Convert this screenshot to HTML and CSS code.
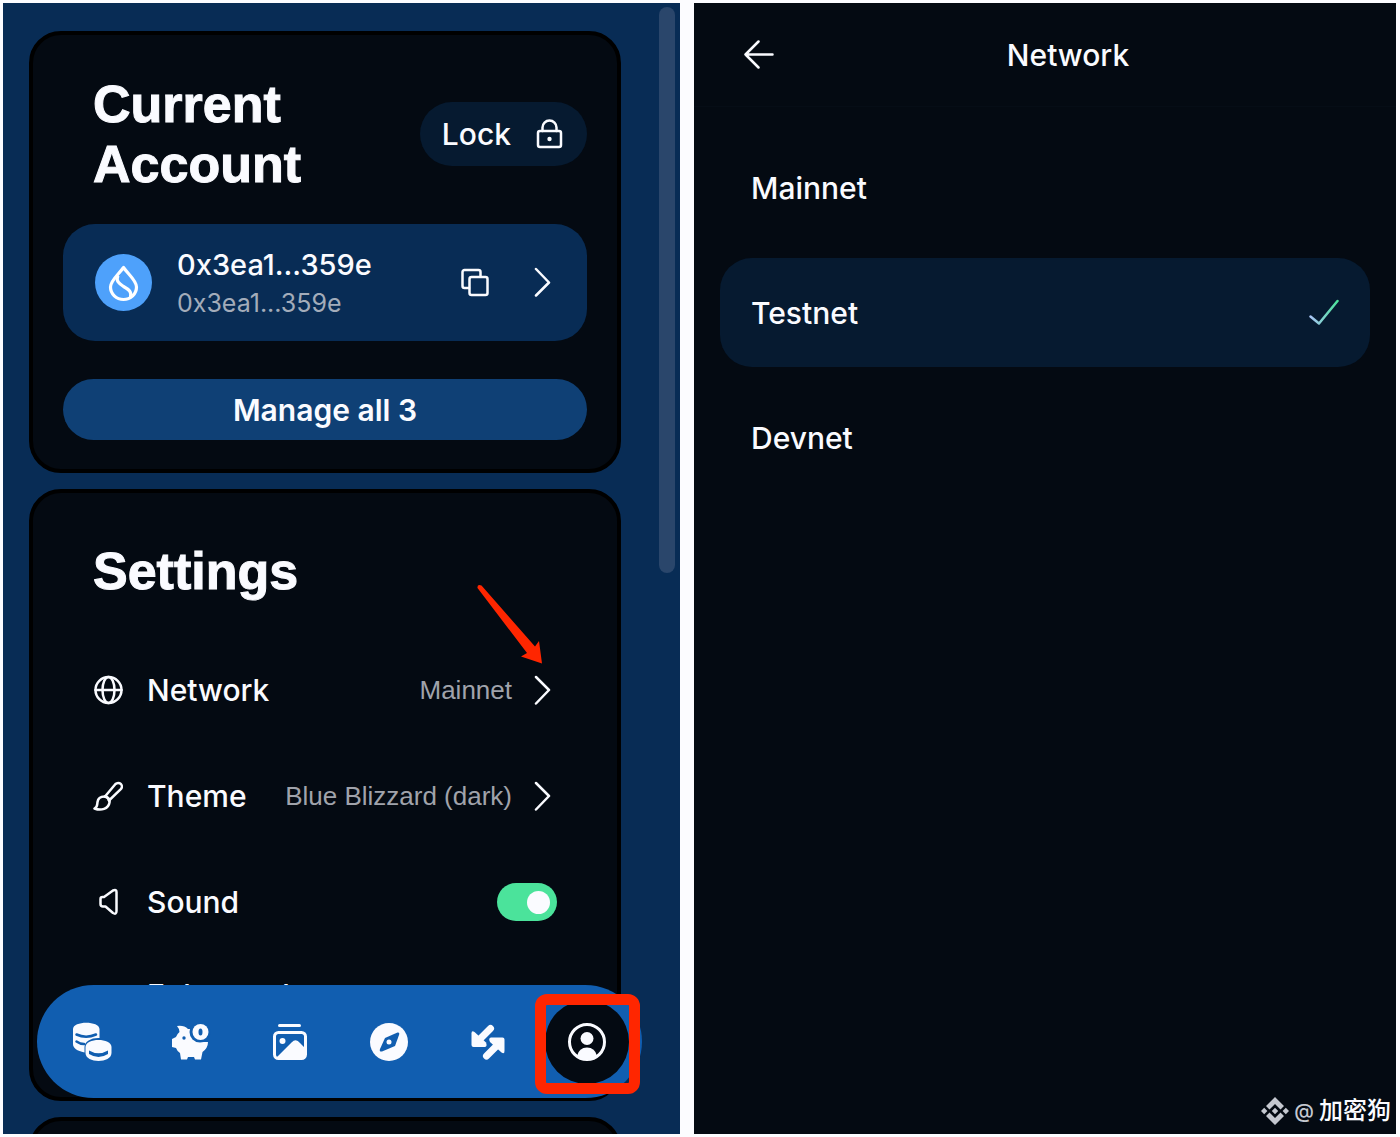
FILE: index.html
```
<!DOCTYPE html>
<html lang="en">
<head>
    <meta charset="UTF-8">
    <meta name="viewport" content="width=device-width, initial-scale=1.0">
    <title>Wallet Settings</title>
    <link rel="stylesheet" href="styles.css">
</head>
<body>

    <div class="app">
        <main class="panel wallet">
            <div class="cards">
                <section class="card">
                    <div class="card-header">
                        <h2>Current Account</h2>
                        <button class="lock-btn" type="button">
                            Lock
                            <svg class="icon" viewBox="0 0 30 30">
                                <rect x="3" y="12" width="23" height="16" rx="2"/>
                                <path d="M7.500 12V8.500a7 7 0 0 1 14 0V12"/>
                                <circle class="solid" cx="14.500" cy="20" r="2.200"/>
                            </svg>
                        </button>
                    </div>

                    <div class="account">
                        <svg class="avatar" viewBox="0 0 57 57">
                            <circle class="avatar-bg" cx="28.500" cy="28.500" r="28.500"/>
                            <path d="M28.500 13.500C24 20 15.500 26.500 15.500 33a13 12.500 0 0 0 26 0C41.500 26.500 33 20 28.500 13.500Z"/>
                            <path d="M23 21.500C20.500 27 24 29.500 28.500 32.500C34 35.500 37 38 35.500 43.500"/>
                        </svg>
                        <div class="account-name">
                            <span>0x3ea1...359e</span>
                            <span class="address">0x3ea1...359e</span>
                        </div>
                        <button class="icon-btn" type="button" aria-label="Copy address">
                            <svg class="icon" viewBox="0 0 30 30">
                                <path d="M9 21H4.500a2 2 0 0 1-2-2V5a2 2 0 0 1 2-2H18.500a2 2 0 0 1 2 2V9.500"/>
                                <rect x="9.500" y="10" width="18" height="18" rx="2"/>
                            </svg>
                        </button>
                        <button class="icon-btn" type="button" aria-label="Open account">
                            <svg class="icon" viewBox="0 0 30 30"><path d="M9 2L22 15.500L9 28.500"/></svg>
                        </button>
                    </div>

                    <button class="manage-btn" type="button">Manage all 3</button>
                </section>

                <section class="card settings">
                    <h2>Settings</h2>
                    <div class="row">
                        <svg class="icon" viewBox="0 0 30 30">
                            <circle cx="15.500" cy="15" r="13"/>
                            <ellipse cx="15.500" cy="15" rx="6" ry="13"/>
                            <path d="M2.500 15H28.500"/>
                        </svg>
                        <span class="row-label">Network</span>
                        <span class="row-value">Mainnet</span>
                        <button class="icon-btn" type="button" aria-label="Change network">
                            <svg class="icon" viewBox="0 0 30 30"><path d="M9 2L22 15L9 28.500"/></svg>
                        </button>
                        <svg class="pointer" viewBox="0 0 66 80">
                            <path d="M4.500 1.500L58 62.500L62 57L65 79.500L44 72.500L50 69L0.500 4Q0 0 4.500 1.500Z"/>
                        </svg>
                    </div>
                    <div class="row">
                        <svg class="icon" viewBox="0 0 30 30">
                            <path d="M12 15.500L22.500 3a3.700 3.700 0 0 1 5.300 5.200L16 19.500"/>
                            <path d="M11.500 15.500C15 15.500 17 18 16.500 21.500C15.500 28 8 30 1.500 27.500C4.500 26 4 24.500 4.500 21C5 17.500 8 15.500 11.500 15.500Z"/>
                            <path d="M12 15.500Q15.500 16.500 16.200 20"/>
                        </svg>
                        <span class="row-label">Theme</span>
                        <span class="row-value">Blue Blizzard (dark)</span>
                        <button class="icon-btn" type="button" aria-label="Change theme">
                            <svg class="icon" viewBox="0 0 30 30"><path d="M9 2L22 15L9 28.500"/></svg>
                        </button>
                    </div>
                    <div class="row">
                        <svg class="icon" viewBox="0 0 30 30">
                            <path d="M7.500 12Q7.500 10 9.500 10H11L20 3.500Q23.500 2 23.500 5V24Q23.500 28 20 26L12.500 19.500H10Q7.500 19.500 7.500 17Z"/>
                        </svg>
                        <label class="row-label" for="sound">Sound</label>
                        <input class="toggle" type="checkbox" id="sound" checked>
                    </div>
                    <div class="row row-last">
                        <span class="row-label">Enhanced</span>
                    </div>
                </section>

                <section class="card"></section>
            </div>

            <div class="scrollbar"></div>

            <nav class="tabs">
                <button class="tab" type="button" aria-label="Coins">
                    <svg viewBox="0 0 40 40">
                        <path d="M1 7C1 -1.500 27.500 -1.500 27.500 7V16C20 15.500 12.500 19 12.500 25V30.500C5 29 1 26 1 22Z"/>
                        <path class="cut" d="M4.500 12.500Q14 17 24 12.500M4.500 19.500Q8 22 12 22"/>
                        <path d="M13.500 25C13.500 15.500 39.500 15.500 39.500 25V31C39.500 41.500 13.500 41.500 13.500 31Z"/>
                        <path class="dot" d="M17 28.500V32Q26.500 38 36 32V28.500Q26.500 34 17 28.500Z"/>
                    </svg>
                </button>
                <button class="tab" type="button" aria-label="Savings">
                    <svg viewBox="0 0 40 40">
                        <path d="M6 4Q13 3 17 7H22Q22 19 31 20H37Q37 26 31.500 30L30 37.500H24L23 35H17L16 37.500H10L9 31Q6 29 5 26L1 25V17L5 15Q6 12 8.500 10Q8 6 6 4Z"/>
                        <circle class="dot" cx="29" cy="10" r="10.500"/>
                        <circle cx="29.500" cy="10" r="8"/>
                        <ellipse class="dot" cx="29.500" cy="10" rx="2" ry="3.500"/>
                        <circle class="dot" cx="13" cy="16" r="1.700"/>
                    </svg>
                </button>
                <button class="tab" type="button" aria-label="Collectibles">
                    <svg viewBox="0 0 40 40">
                        <path class="line" d="M9.500 3.500H29.500"/>
                        <rect class="line" x="4.500" y="10.500" width="31" height="26" rx="4"/>
                        <circle cx="12.500" cy="19" r="3"/>
                        <path d="M6 36L21.500 20.500Q26 16 30 21L35 26V36Z"/>
                    </svg>
                </button>
                <button class="tab" type="button" aria-label="Explore">
                    <svg viewBox="0 0 40 40">
                        <circle cx="20" cy="20" r="19"/>
                        <path class="dot" d="M28.500 10.500Q31 10 30 13L26 24L13 29.500Q10 30 11 27L16 16Z"/>
                        <circle cx="20" cy="20" r="2.500"/>
                    </svg>
                </button>
                <button class="tab" type="button" aria-label="Activity">
                    <svg viewBox="0 0 40 40">
                        <path class="thick" d="M22.500 6.500L12 17"/>
                        <path d="M3.500 11.500Q3.500 8 6.500 10L18 20.500Q19.500 24.500 17 25H5.500Q3.500 25 3.500 23Z"/>
                        <path class="thick" d="M18.500 34L29 23.500"/>
                        <path d="M36.500 29Q36.500 32.500 33.500 30.500L22 20Q20 16 23 15.500H34.500Q36.500 15.500 36.500 17.500Z"/>
                    </svg>
                </button>
                <button class="tab active" type="button" aria-label="Account">
                    <svg viewBox="0 0 40 40">
                        <circle class="line" cx="20" cy="20" r="17.500"/>
                        <circle cx="20" cy="16.500" r="6.500"/>
                        <path d="M10 34Q12 25.500 20 25.500Q28 25.500 30 34Q20 40 10 34Z"/>
                    </svg>
                </button>
            </nav>
        </main>

        <section class="panel network">
            <header class="network-header">
                <button class="icon-btn" type="button" aria-label="Back">
                    <svg class="icon" viewBox="0 0 30 30"><path d="M14.500 1.500L1.500 14.500L14.500 27.500M1.500 14.500H28.500"/></svg>
                </button>
                <h1>Network</h1>
            </header>

            <div class="options">
                <button class="option" type="button">Mainnet</button>
                <button class="option selected" type="button">
                    Testnet
                    <svg class="icon" viewBox="0 0 30 30">
                        <defs>
                            <linearGradient id="tick" x1="0" y1="0" x2="1" y2="0">
                                <stop offset="0" stop-color="#a9c4f5"/>
                                <stop offset="1" stop-color="#4be39b"/>
                            </linearGradient>
                        </defs>
                        <path d="M1.500 18.500L10 25.500L28.500 3" stroke="url(#tick)"/>
                    </svg>
                </button>
                <button class="option" type="button">Devnet</button>
            </div>

            <footer class="credit">
                <svg viewBox="0 0 28 28">
                    <path d="M14 0L23 9L19.500 12.500L14 7L8.500 12.500L5 9ZM14 28L23 19L19.500 15.500L14 21L8.500 15.500L5 19ZM14 10.800L17.200 14L14 17.200L10.800 14ZM3.200 10.800L6.400 14L3.200 17.200L0 14ZM24.800 10.800L28 14L24.800 17.200L21.600 14Z"/>
                </svg>
                <span class="at">@</span>
                <span>加密狗</span>
            </footer>
        </section>
    </div>

</body>
</html>
```
FILE: styles.css
```
* {
    box-sizing: border-box;
}

body {
    margin: 0;
    font-family: Inter, "Noto Sans CJK SC", sans-serif;
    font-size: 30px;
    font-weight: 500;
    color: #fafbff;
    background-color: #fcfcff;
}

h1, h2 {
    margin: 0;
}

h2 {
    font-family: "Liberation Sans", Arial, sans-serif;
    font-size: 52px;
    line-height: 60px;
    -webkit-text-stroke: 1px currentColor;
}

button {
    padding: 0;
    border: none;
    font: inherit;
    color: inherit;
    background: none;
    cursor: pointer;
}

.app {
    display: grid;
    grid-template-columns: 677fr 702fr;
    gap: 14px;
    height: 100vh;
    padding: 3px 4px 3px 3px;
}

.panel {
    position: relative;
    display: flex;
    flex-direction: column;
    min-height: 0;
    overflow: hidden;
}

.icon {
    display: block;
    flex: none;
    width: 30px;
    height: 30px;
    fill: none;
    stroke: currentColor;
    stroke-width: 2.5;
    stroke-linecap: round;
    stroke-linejoin: round;
}

.icon .solid {
    fill: currentColor;
    stroke: none;
}

/* Wallet panel */
.wallet {
    padding: 28px 59px 0 26px;
    background-color: #082c55;
}

.cards {
    display: flex;
    flex-direction: column;
    gap: 16px;
}

.card {
    padding: 39px 30px 29px;
    border: 4px solid #000;
    border-radius: 32px;
    background-color: #040a12;
}

.card-header {
    display: flex;
    align-items: center;
    justify-content: space-between;
    padding-left: 30px;
}

.card-header h2 {
    width: min-content;
}

.lock-btn {
    display: flex;
    align-items: center;
    gap: 24px;
    height: 64px;
    padding: 0 22px;
    border-radius: 32px;
    background-color: #061a30;
}

.account {
    display: flex;
    align-items: center;
    margin-top: 30px;
    padding: 18px 30px 19px 32px;
    border-radius: 32px;
    background-color: #082c55;
}

.avatar {
    flex: none;
    width: 57px;
    height: 57px;
    fill: none;
    stroke: #fff;
    stroke-width: 3.2;
    stroke-linejoin: round;
}

.avatar-bg {
    fill: #4ea1fb;
    stroke: none;
}

.account-name {
    display: flex;
    flex: 1;
    flex-direction: column;
    margin-left: 25px;
    padding-top: 4px;
    font-size: 29px;
    line-height: 38px;
}

.address {
    font-size: 25px;
    font-weight: 400;
    color: #a3acba;
}

.account .icon-btn {
    margin-left: 37px;
}

.manage-btn {
    display: block;
    width: 100%;
    height: 61px;
    margin-top: 38px;
    border-radius: 32px;
    font-weight: 600;
    background-color: #0f4075;
}

.settings {
    padding: 48px 30px 36px;
}

.settings h2 {
    margin-bottom: 36px;
    padding-left: 30px;
}

.row {
    position: relative;
    display: flex;
    align-items: center;
    height: 106px;
    padding: 0 30px;
}

.row-label {
    flex: 1;
    margin-left: 24px;
}

.row-value {
    margin-right: 15px;
    font-family: "Liberation Sans", Arial, sans-serif;
    font-size: 26px;
    color: #a0a3ab;
}

.row-last {
    padding: 0 30px 26px 60px;
}

.pointer {
    position: absolute;
    top: -53px;
    right: 44px;
    width: 66px;
    height: 80px;
    fill: #ff2600;
}

.toggle {
    appearance: none;
    width: 60px;
    height: 38px;
    margin: 0;
    padding: 8px 7px;
    border-radius: 19px;
    background-color: #4be39b;
    cursor: pointer;
}

.toggle::before {
    content: "";
    display: block;
    width: 23px;
    height: 23px;
    border-radius: 50%;
    background-color: #fafbff;
}

.toggle:checked::before {
    margin-left: auto;
}

.scrollbar {
    position: absolute;
    top: 4px;
    right: 5px;
    width: 16px;
    height: 50%;
    border-radius: 8px;
    background-color: #2a466b;
}

/* Bottom tabs float over the cards */
.tabs {
    position: absolute;
    right: 38px;
    bottom: 36px;
    left: 34px;
    display: flex;
    height: 113px;
    padding: 0 6px;
    border-radius: 57px;
    background-color: #115eb0;
}

.tab {
    position: relative;
    display: flex;
    flex: 1;
    align-items: center;
    justify-content: center;
}

.tab svg {
    width: 40px;
    height: 40px;
    fill: currentColor;
}

.tab .line {
    fill: none;
    stroke: currentColor;
    stroke-width: 3;
    stroke-linecap: round;
}

.tab .thick {
    stroke: currentColor;
    stroke-width: 7;
    stroke-linecap: round;
}

.tab .cut {
    fill: none;
    stroke: #115eb0;
    stroke-width: 2.5;
    stroke-linecap: round;
}

.tab .dot {
    fill: #115eb0;
}

.tab.active svg {
    width: 84px;
    height: 84px;
    padding: 22px;
    border-radius: 50%;
    background-color: #040a12;
}

.tab.active::after {
    content: "";
    position: absolute;
    top: 9px;
    right: -4px;
    bottom: 4px;
    left: -2px;
    border: 11px solid #ff2600;
    border-radius: 12px;
}

/* Network panel */
.network {
    background-color: #040a12;
}

.network-header {
    display: flex;
    align-items: center;
    height: 104px;
    padding: 0 34px 0 50px;
    border-bottom: 1px solid #060d16;
}

.network-header h1 {
    flex: 1;
    font-size: 30px;
    font-weight: 500;
    text-align: center;
}

.options {
    display: flex;
    flex-direction: column;
    gap: 16px;
    padding: 26px;
}

.option {
    display: flex;
    align-items: center;
    justify-content: space-between;
    height: 109px;
    padding: 0 31px;
    border-radius: 32px;
}

.option.selected {
    background-color: #061a30;
}

.credit {
    display: flex;
    align-items: center;
    justify-content: flex-end;
    gap: 5px;
    margin-top: auto;
    padding: 5px;
    font-size: 24px;
    line-height: 36px;
}

.credit svg {
    width: 28px;
    height: 28px;
    fill: #c5c8d0;
}

.at {
    font-size: 20px;
    color: #c5c8d0;
}
```
